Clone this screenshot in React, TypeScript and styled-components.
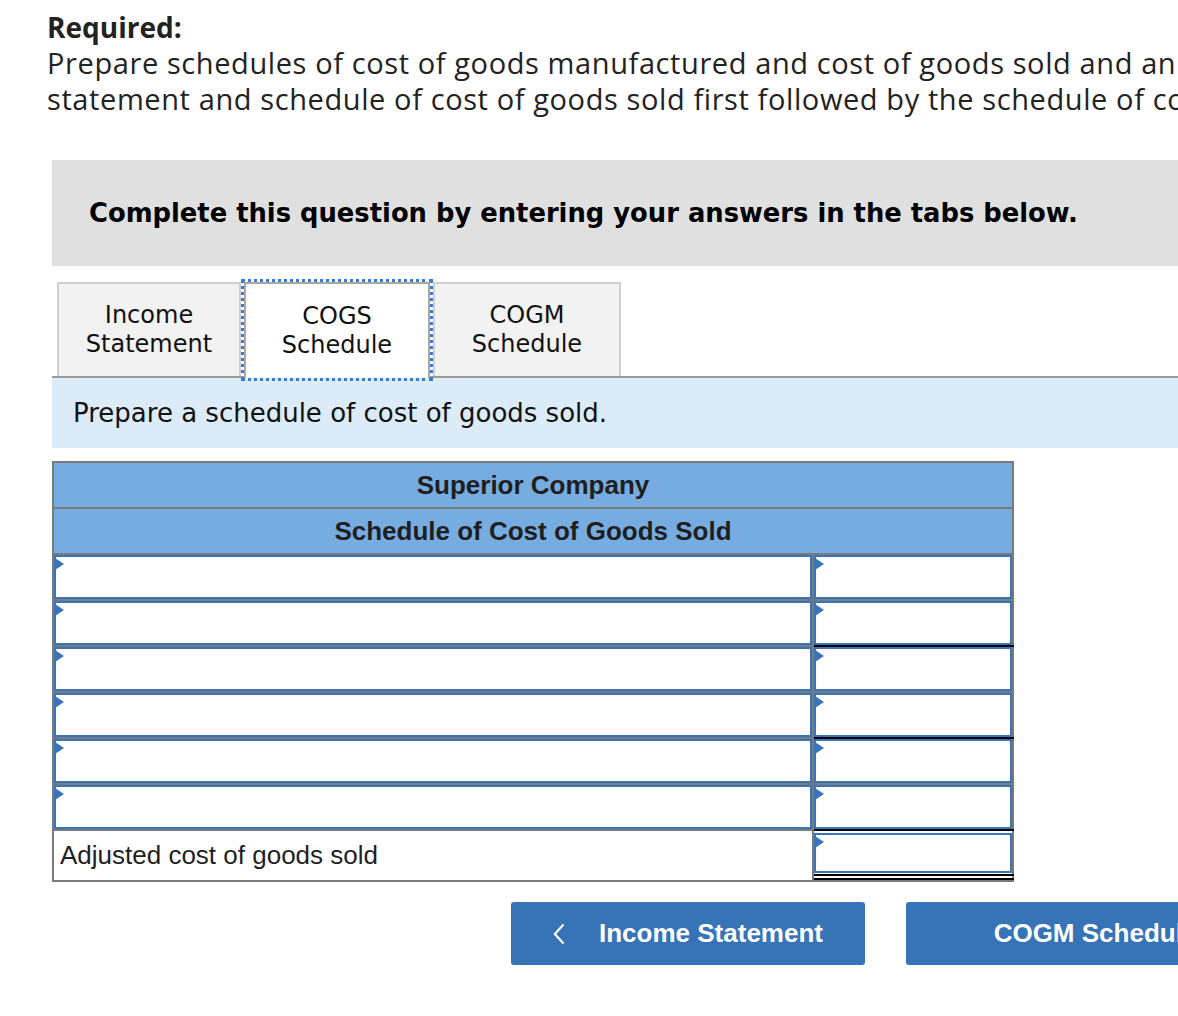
import styled, { createGlobalStyle } from 'styled-components';

const GlobalStyle = createGlobalStyle`
  html, body {
    margin: 0;
    padding: 0;
    background: #fff;
    overflow: hidden;
  }
`;

const Page = styled.div`
  width: 1400px;
  padding: 9px 0 40px 47px;
  color: #1a1a1a;
`;

const Required = styled.div`
  font-family: 'Open Sans', Lato, sans-serif;
  font-size: 29px;
  letter-spacing: 0.6px;
  line-height: 36px;
  white-space: nowrap;
  color: #222;

  strong {
    display: block;
    font-size: 28px;
    letter-spacing: 0;
    font-weight: 700;
  }
`;

const Question = styled.div`
  margin: 43px 0 0 5px;
`;

const Banner = styled.div`
  height: 106px;
  display: flex;
  align-items: center;
  padding-left: 37px;
  background: #e0e0e0;
  font-family: 'DejaVu Sans', Verdana, sans-serif;
  font-weight: 700;
  font-size: 25.8px;
  color: #000;
`;

const Tabs = styled.div`
  display: flex;
  margin-top: 16px;
  padding-left: 5px;
  border-bottom: 2px solid #9a9a9a;
`;

const Tab = styled.div<{ $active?: boolean; $width: number }>`
  width: ${(p) => p.$width}px;
  height: ${(p) => (p.$active ? '96px' : '94px')};
  box-sizing: border-box;
  display: flex;
  align-items: center;
  justify-content: center;
  text-align: center;
  font-family: 'DejaVu Sans', Verdana, sans-serif;
  font-size: 24px;
  line-height: 29px;
  color: #111;
  background: ${(p) => (p.$active ? '#fff' : '#f2f2f2')};
  border: 2px solid ${(p) => (p.$active ? '#a8a8a8' : '#cfcfcf')};
  border-bottom: none;
  margin: ${(p) => (p.$active ? '0 3px -2px' : '0')};
  outline: ${(p) => (p.$active ? '3px dotted #3a7bd5' : 'none')};
  outline-offset: 0;
`;

const Instruction = styled.div`
  height: 70px;
  display: flex;
  align-items: center;
  padding-left: 21px;
  background: #dcebf8;
  font-family: 'DejaVu Sans', Verdana, sans-serif;
  font-size: 26px;
  color: #111;
`;

const Sheet = styled.div`
  width: 962px;
  margin-top: 13px;
  box-sizing: border-box;
  border: 2px solid #7a7a7a;
  font-family: 'Liberation Sans', Arial, sans-serif;
  font-size: 26px;
  color: #1f1f1f;
`;

const TitleRow = styled.div`
  height: 44px;
  display: flex;
  align-items: center;
  justify-content: center;
  background: #77ace0;
  font-weight: 700;
  border-bottom: 2px solid #7a7a7a;
`;

const Row = styled.div<{ $last?: boolean }>`
  display: grid;
  grid-template-columns: 1fr 200px;
  height: ${(p) => (p.$last ? '49px' : '46px')};
  border-bottom: ${(p) => (p.$last ? 'none' : '2px solid #7a7a7a')};
  box-sizing: border-box;
`;

const Cell = styled.div<{ $underline?: 'single' | 'double' }>`
  position: relative;
  display: flex;
  align-items: center;
  & + & {
    border-left: 2px solid #7a7a7a;
  }
  &::after {
    content: '';
    position: absolute;
    left: 0;
    right: -2px;
    bottom: ${(p) => (p.$underline === 'double' ? '0' : '-2px')};
    height: 2px;
    border-top: ${(p) => (p.$underline === 'double' ? '2px solid #000' : 'none')};
    border-bottom: 2px solid #000;
    display: ${(p) => (p.$underline ? 'block' : 'none')};
  }
`;

const Field = styled.div<{ $short?: boolean }>`
  position: relative;
  width: 100%;
  height: ${(p) => (p.$short ? '40px' : '100%')};
  align-self: flex-start;
  margin-top: ${(p) => (p.$short ? '2px' : '0')};
  box-sizing: border-box;
  border: 2px solid #3a74b8;
  background: #fff;

  &::before {
    content: '';
    position: absolute;
    left: -1px;
    top: 1px;
    border-top: 6px solid transparent;
    border-bottom: 6px solid transparent;
    border-left: 9px solid #3a74b8;
  }
`;

const Label = styled.span`
  padding-left: 6px;
`;

const Buttons = styled.div`
  display: flex;
  gap: 41px;
  margin: 20px 0 0 459px;
`;

const NavButton = styled.button<{ $width: number }>`
  width: ${(p) => p.$width}px;
  height: 63px;
  flex: none;
  display: flex;
  align-items: center;
  justify-content: center;
  border: none;
  border-radius: 3px;
  background: #3673b7;
  color: #fff;
  font-family: 'Liberation Sans', Arial, sans-serif;
  font-weight: 700;
  font-size: 26px;
  cursor: pointer;
  padding: 0;
`;

const Chevron = styled.svg<{ $side: 'left' | 'right' }>`
  width: 12px;
  height: 22px;
  flex: none;
  ${(p) => (p.$side === 'left' ? 'margin-right: 34px;' : 'margin-left: 34px;')}
`;

const rows: Array<'single' | undefined> = [undefined, 'single', undefined, 'single', undefined, 'single'];

export default function App() {
  return (
    <Page>
      <GlobalStyle />
      <Required>
        <strong>Required:</strong>
        Prepare schedules of cost of goods manufactured and cost of goods sold and an income
        <br />
        statement and schedule of cost of goods sold first followed by the schedule of cost of goods manufactured.
      </Required>
      <Question>
        <Banner>Complete this question by entering your answers in the tabs below.</Banner>
        <Tabs>
          <Tab $width={184}>Income<br />Statement</Tab>
          <Tab $width={186} $active>COGS<br />Schedule</Tab>
          <Tab $width={188}>COGM<br />Schedule</Tab>
        </Tabs>
        <Instruction>Prepare a schedule of cost of goods sold.</Instruction>
        <Sheet>
          <TitleRow>Superior Company</TitleRow>
          <TitleRow>Schedule of Cost of Goods Sold</TitleRow>
          {rows.map((u, i) => (
            <Row key={i}>
              <Cell><Field /></Cell>
              <Cell $underline={u}><Field /></Cell>
            </Row>
          ))}
          <Row $last>
            <Cell><Label>Adjusted cost of goods sold</Label></Cell>
            <Cell $underline="double"><Field $short /></Cell>
          </Row>
        </Sheet>
        <Buttons>
          <NavButton $width={354}>
            <Chevron $side="left" viewBox="0 0 12 22" fill="none" stroke="#fff" strokeWidth="2.2">
              <path d="M10.5 1.5 L1.8 11 L10.5 20.5" />
            </Chevron>
            Income Statement
          </NavButton>
          <NavButton $width={425}>
            COGM Schedule
            <Chevron $side="right" viewBox="0 0 12 22" fill="none" stroke="#fff" strokeWidth="2.2">
              <path d="M1.5 1.5 L10.2 11 L1.5 20.5" />
            </Chevron>
          </NavButton>
        </Buttons>
      </Question>
    </Page>
  );
}
